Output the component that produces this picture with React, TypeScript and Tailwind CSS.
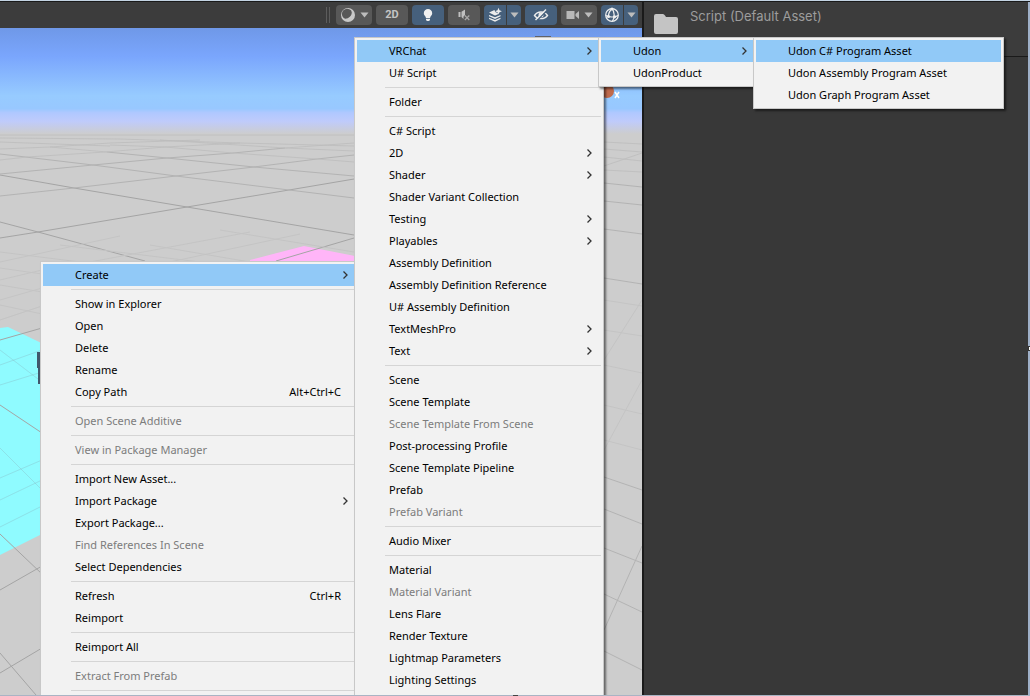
import React from 'react';

type Item = { label: string; keys?: string; sub?: boolean; off?: boolean; on?: boolean } | '-';

const item = (label: string): Item => ({ label });
const sub = (label: string): Item => ({ label, sub: true });
const off = (label: string): Item => ({ label, off: true });

const assetsMenu: Item[] = [
  { label: 'Create', sub: true, on: true },
  '-',
  item('Show in Explorer'), item('Open'), item('Delete'), item('Rename'),
  { label: 'Copy Path', keys: 'Alt+Ctrl+C' },
  '-',
  off('Open Scene Additive'),
  '-',
  off('View in Package Manager'),
  '-',
  item('Import New Asset...'), sub('Import Package'), item('Export Package...'),
  off('Find References In Scene'), item('Select Dependencies'),
  '-',
  { label: 'Refresh', keys: 'Ctrl+R' }, item('Reimport'),
  '-',
  item('Reimport All'),
  '-',
  off('Extract From Prefab'),
  '-',
];

const createMenu: Item[] = [
  { label: 'VRChat', sub: true, on: true }, item('U# Script'),
  '-',
  item('Folder'),
  '-',
  item('C# Script'), sub('2D'), sub('Shader'), item('Shader Variant Collection'),
  sub('Testing'), sub('Playables'), item('Assembly Definition'),
  item('Assembly Definition Reference'), item('U# Assembly Definition'),
  sub('TextMeshPro'), sub('Text'),
  '-',
  item('Scene'), item('Scene Template'), off('Scene Template From Scene'),
  item('Post-processing Profile'), item('Scene Template Pipeline'), item('Prefab'),
  off('Prefab Variant'),
  '-',
  item('Audio Mixer'),
  '-',
  item('Material'), off('Material Variant'), item('Lens Flare'), item('Render Texture'),
  item('Lightmap Parameters'), item('Lighting Settings'),
];

const vrchatMenu: Item[] = [{ label: 'Udon', sub: true, on: true }, item('UdonProduct')];

const udonMenu: Item[] = [
  { label: 'Udon C# Program Asset', on: true },
  item('Udon Assembly Program Asset'),
  item('Udon Graph Program Asset'),
];

const Menu: React.FC<{ items: Item[]; label: string; className: string }> = ({ items, label, className }) => (
  <div
    role="menu"
    aria-label={label}
    className={`absolute border border-[#c8c8c8] bg-[#f2f2f2] p-[2px] shadow-[2px_2px_2px_rgba(0,0,0,0.5)] ${className}`}
  >
    {items.map((it, i) =>
      it === '-' ? (
        <hr key={i} className="my-[3px] ml-7 h-px border-0 bg-[#d5d5d5]" />
      ) : (
        <button
          key={i}
          role="menuitem"
          disabled={it.off}
          className={`flex h-[22px] w-full items-center whitespace-nowrap pl-8 pr-2 text-left text-[11px] leading-[22px] ${
            it.on ? 'bg-[#91c9f7]' : ''
          } ${it.off ? 'text-[#7c7c7c]' : 'text-black'}`}
        >
          <span className="flex-1">{it.label}</span>
          {it.keys && <span className="pr-2">{it.keys}</span>}
          {it.sub && (
            <svg width="8" height="10" viewBox="0 0 8 10" fill="none" stroke="#333" strokeWidth="1.3">
              <path d="M2.5 1.5 6 5 2.5 8.5" />
            </svg>
          )}
        </button>
      )
    )}
  </div>
);

const Caret = () => (
  <svg width="9" height="6" viewBox="0 0 9 6" fill="#bdbdbd">
    <path d="M0.5 0.5h8L4.5 5.5z" />
  </svg>
);

const Tool: React.FC<{ label: string; className: string; children: React.ReactNode }> = ({ label, className, children }) => (
  <button aria-label={label} className={`flex h-5 items-center justify-center ${className}`}>
    {children}
  </button>
);

const Toolbar = () => (
  <div className="flex h-[26px] items-center justify-end gap-1 bg-[#3c3c3c] pr-1">
    <div className="mr-0.5 h-4 w-1 border-x border-[#5c5c5c]"></div>
    <Tool label="Draw mode" className="w-9 gap-1 rounded-sm bg-[#585858]">
      <svg width="16" height="16" viewBox="0 0 16 16">
        <circle cx="8" cy="8" r="7" fill="#c8c8c8" />
        <circle cx="7.2" cy="7" r="5.3" fill="#585858" />
        <path d="M11.500 3.500a5.600 5.600 0 0 1-8 8 6.500 6.500 0 0 0 8-8z" fill="#c8c8c8" />
      </svg>
      <Caret />
    </Tool>
    <Tool label="2D" className="w-8 rounded-sm bg-[#585858] font-[Roboto,sans-serif] text-[11px] font-bold text-[#c4c4c4]">2D</Tool>
    <Tool label="Lighting" className="w-8 rounded-sm bg-[#46607c]">
      <svg width="16" height="16" viewBox="0 0 16 16" fill="#f0f0f0">
        <path d="M8 2a4.200 4.200 0 0 0-4.200 4.200c0 1.800 1.200 2.600 2 3.800V11h4.400v-1c.8-1.200 2-2 2-3.800A4.200 4.200 0 0 0 8 2zM6 11.700h4v1.200L9 14H7l-1-1.100z" />
      </svg>
    </Tool>
    <Tool label="Audio" className="w-8 rounded-sm bg-[#585858]">
      <svg width="16" height="16" viewBox="0 0 16 16" fill="#c0c0c0">
        <path d="M2.500 5h2v5h-2zM5.500 4.800 9 2.500V8L7.500 9.500V12l-2-2z" />
        <path d="M8.800 8.500l4.500 4.500M13.300 8.500l-4.500 4.500" stroke="#a8a8a8" strokeWidth="1.200" />
      </svg>
    </Tool>
    <div className="flex gap-px">
      <Tool label="Effects" className="w-[22px] rounded-l-sm bg-[#46607c]">
        <svg width="16" height="16" viewBox="0 0 16 16" fill="#ececec">
          <path d="M2 5.500 7.500 3l.7 2L11 6.300v1L8 8.500z" />
          <path d="M2 8l6 2.300L13.500 8v1.300L8 12 2 9.300zM2 10.800l6 2.300 5.500-2.300v1.200L8 14.800 2 12z" />
          <path d="M11.500.8l1 2.400 2.400 1-2.400 1-1 2.400-1-2.400-2.400-1 2.400-1z" />
        </svg>
      </Tool>
      <Tool label="Effects options" className="w-[14px] rounded-r-sm bg-[#46607c]"><Caret /></Tool>
    </div>
    <Tool label="Hidden objects" className="w-8 rounded-sm bg-[#46607c]">
      <svg width="16" height="16" viewBox="0 0 16 16" fill="none" stroke="#ececec" strokeWidth="1.4">
        <path d="M1.500 8.500C4.500 3.800 11.500 3.800 14.500 8.500 11.500 12.700 4.500 12.700 1.500 8.500z" />
        <circle cx="8" cy="8" r="1.800" fill="#ececec" />
        <path d="M14 3.500 3.500 14" stroke="#46607c" strokeWidth="1.500" />
        <path d="M13 2.500 2.500 13" />
      </svg>
    </Tool>
    <Tool label="Camera" className="w-9 gap-1 rounded-sm bg-[#585858]">
      <svg width="14" height="10" viewBox="0 0 14 10" fill="#b8b8b8"><path d="M0.500 1h8v8h-8zM9.500 4l3.500-3v8L9.500 6z" /></svg>
      <Caret />
    </Tool>
    <div className="flex gap-px">
      <Tool label="Gizmos" className="w-[22px] rounded-l-sm bg-[#46607c]">
        <svg width="16" height="16" viewBox="0 0 16 16" fill="none" stroke="#f0f0f0" strokeWidth="1.200">
          <circle cx="8" cy="8" r="6.300" />
          <path d="M8 1.700C10.500 4.500 11 10 8.500 14.300M8 1.700C6 3.500 4.500 6 4.500 9M1.700 8.500c3.500 2 9 2 12.600 0" />
          <g fill="#f0f0f0" stroke="none">
            <circle cx="8" cy="2" r="1.600" />
            <circle cx="4.500" cy="9.500" r="1.600" />
            <circle cx="10.500" cy="9.800" r="1.600" />
          </g>
        </svg>
      </Tool>
      <Tool label="Gizmo options" className="w-[14px] rounded-r-sm bg-[#46607c]"><Caret /></Tool>
    </div>
  </div>
);

// Viewport: skybox gradient, ground grid and the two coloured planes
const SceneView = () => (
  <svg className="min-h-0 w-full flex-1" viewBox="0 28 642 667" preserveAspectRatio="none">
    <defs>
      <linearGradient id="sky" gradientUnits="userSpaceOnUse" x1="0" y1="28" x2="0" y2="134">
        <stop offset="0" stopColor="#6f98e8" />
        <stop offset="0.270" stopColor="#7aa6fd" />
        <stop offset="0.640" stopColor="#97cbff" />
        <stop offset="0.760" stopColor="#98c8ff" />
        <stop offset="0.800" stopColor="#b0c8ff" />
        <stop offset="0.880" stopColor="#bfcbfb" />
        <stop offset="1" stopColor="#cdcdcd" />
      </linearGradient>
    </defs>
    <rect y="28" width="642" height="667" fill="#cdcdcd" />
    <rect y="28" width="642" height="106" fill="url(#sky)" />
    <path d="M250 260 304 246 360 257V275H250z" fill="#ffb5f8" />
    <path d="M0 328 8 327 60 352V525L0 555z" fill="#8ffbff" />
    {/* near grid lines */}
    <path
      d="M0 222 38 232 145 261M0 238 38 232 187 207 289 190 354 179M0 175 74 188 187 207 354 235M276 261 354 238M0 340 42 328M0 405 42 433M0 590 42 566M0 653 36 695M0 673 42 648M0 534 42 574"
      fill="none"
      stroke="#a4a4a4"
    />
    {/* middle distance */}
    <path
      d="M0 196 74 188 176 176 254 167 317 159 354 155M0 154 93 165 176 176 289 190 354 198M0 174 93 165 167 158 233 153 285 148M107 152 167 158 254 167 354 176M604 183 642 187M604 201 642 205M604 229 642 234M604 278 642 284M604 477 642 490M604 509 642 524M604 548 642 563M604 594 642 612M604 630 642 546M604 651 642 670"
      fill="none"
      stroke="#b3b3b3"
    />
    {/* lines fading out towards the horizon */}
    <path
      d="M0 160 27 157 105 152 165 147 240 143M50 147 107 152M110 145 165 147 233 153 317 159 354 162M0 149 50 147 110 143 200 140M0 142 110 146M160 140 285 148 354 151M240 143 354 146M0 138 120 139 240 143M0 135H354M285 148 354 143M604 149 642 152M604 157 642 161M604 166 642 153M604 170 642 172M604 142 642 144"
      fill="none"
      stroke="#bdbdbd"
      strokeWidth="0.800"
    />
    {/* fine subdivisions */}
    <path
      d="M0 252 80 262M0 268 42 274M0 285 42 292M0 305 42 314M0 262 120 236M0 280 42 270M0 300 42 288M0 320 42 306M60 245 200 262M150 245 250 262M90 262 250 232M170 262 300 234M220 230 354 252M604 300 642 306M604 330 642 336M604 365 642 373M604 405 642 414M604 440 642 450M604 360 642 300M604 450 642 380"
      fill="none"
      stroke="#c4c4c4"
    />
    <g fill="none" stroke="#8297a5" strokeOpacity="0.25">
      <path d="M0 350 42 382M0 365 42 350M0 385 42 372M0 448 42 490M0 478 42 460M0 500 42 480M0 527 42 506" />
    </g>
    <path d="M37 352h4v32h-3v-16h-1z" fill="#40586c" />
    <path d="M535 36h16v2h-16z" fill="#62636a" />
    <circle cx="607" cy="91" r="7" fill="#c06b4d" />
    <path d="M615 92l4 6M619 92l-4 6" stroke="#fff" strokeWidth="1.500" />
  </svg>
);

export default function App() {
  return (
    <div className="flex h-screen flex-col overflow-hidden font-['Noto_Sans',sans-serif]">
      <div className="h-px flex-none bg-[#c3d3e2]"></div>
      <div className="relative flex min-h-0 flex-1 overflow-hidden bg-[#1a1a1a] pt-px">
        <main className="flex w-[642px] flex-none flex-col">
          <Toolbar />
          <SceneView />
        </main>
        <aside className="ml-[2px] flex flex-1 flex-col bg-[#383838]">
          <header className="flex h-[55px] items-start gap-3 border-b border-[#1a1a1a] bg-[#3c3c3c] pl-[10px] pt-1">
            <svg className="mt-2" width="24" height="20" viewBox="0 0 24 20" fill="#c4c4c4">
              <path d="M0 2q0-2 2-2h7q1 0 2 1.500L12 3h10q2 0 2 2v13q0 2-2 2H2q-2 0-2-2z" />
            </svg>
            <h1 className="font-['Inter',sans-serif] text-[13px] leading-5 text-[#9d9d9d]">Script (Default Asset)</h1>
          </header>
        </aside>
        {/* window edge with its resize handle */}
        <div className="flex w-[2px] items-center bg-[#9fb0c8]">
          <div className="h-[5px] w-full border-y border-l border-[#333] bg-white"></div>
        </div>

        {/* Cascading context menus, each overlapping its parent */}
        <Menu items={assetsMenu} label="Assets" className="-bottom-1 left-10 top-[260px] w-[320px]" />
        <Menu items={createMenu} label="Create" className="-bottom-1 left-[354px] top-9 w-[250px]" />
        <Menu items={vrchatMenu} label="VRChat" className="left-[598px] top-9 w-[161px]" />
        <Menu items={udonMenu} label="Udon" className="left-[753px] top-9 w-[251px]" />
      </div>
      <div className="flex h-px flex-none justify-center bg-[#a9b4c4]">
        <div className="w-[5px] bg-[#444]"></div>
      </div>
    </div>
  );
}
